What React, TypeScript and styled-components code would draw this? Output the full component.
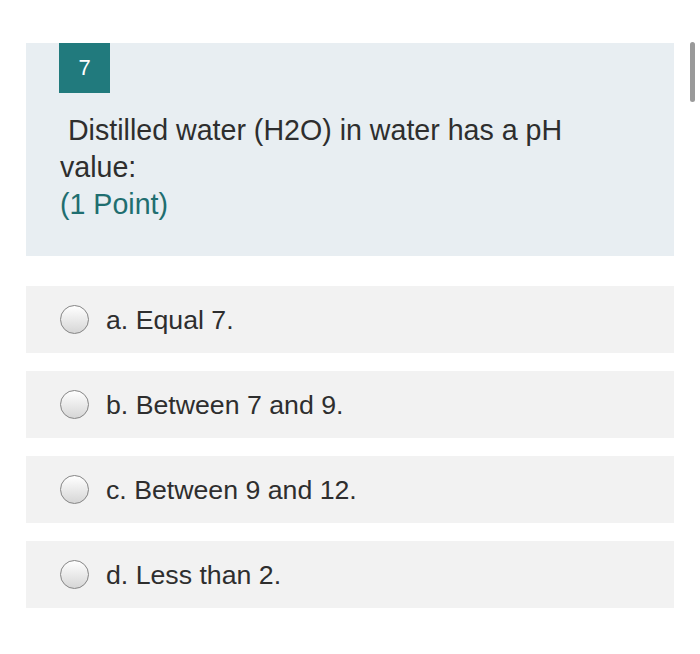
import React from "react";
import styled, { createGlobalStyle } from "styled-components";

const Global = createGlobalStyle`
  html, body {
    margin: 0;
    padding: 0;
    background: #ffffff;
    font-family: "Liberation Sans", Arial, sans-serif;
    color: #333333;
  }
`;

const Page = styled.div`
  position: relative;
  width: 700px;
  height: 654px;
  box-sizing: border-box;
  padding: 43px 26px 0 26px;
`;

const Scrollbar = styled.div`
  position: absolute;
  top: 42px;
  right: 5px;
  width: 5px;
  height: 60px;
  border-radius: 3px;
  background: #9a9a9a;
`;

const Question = styled.div`
  background: #e8eef2;
  padding: 0 54px 33px 33px;
  display: flex;
  flex-direction: column;
  align-items: flex-start;
`;

const Badge = styled.div`
  width: 51px;
  height: 50px;
  background: #217a7d;
  color: #ffffff;
  font-size: 22px;
  display: flex;
  align-items: center;
  justify-content: center;
`;

const Title = styled.div`
  margin-top: 19px;
  margin-left: 1px;
  font-size: 28.6px;
  line-height: 37px;
  color: #2e2e2e;
`;

const Points = styled.div`
  color: #1f6e70;
`;

const OptionList = styled.div`
  margin-top: 30px;
  display: flex;
  flex-direction: column;
  gap: 18px;
`;

const Option = styled.div`
  height: 67px;
  background: #f2f2f2;
  display: flex;
  align-items: center;
  padding-left: 34px;
  gap: 17px;
`;

const Radio = styled.span`
  width: 27px;
  height: 27px;
  border-radius: 50%;
  border: 1.5px solid #858585;
  background: linear-gradient(#ffffff, #d6d6d6);
  flex: none;
`;

const Label = styled.span`
  font-size: 26.7px;
  line-height: 30px;
  color: #2e2e2e;
`;

const options = [
  "a. Equal 7.",
  "b. Between 7 and 9.",
  "c. Between 9 and 12.",
  "d. Less than 2.",
];

function App() {
  return (
    <Page>
      <Global />
      <Scrollbar />
      <Question>
        <Badge>7</Badge>
        <Title>
          {"\u00a0"}Distilled water (H2O) in water has a pH value:
          <Points>(1 Point)</Points>
        </Title>
      </Question>
      <OptionList>
        {options.map((o) => (
          <Option key={o}>
            <Radio />
            <Label>{o}</Label>
          </Option>
        ))}
      </OptionList>
    </Page>
  );
}

export default App;
